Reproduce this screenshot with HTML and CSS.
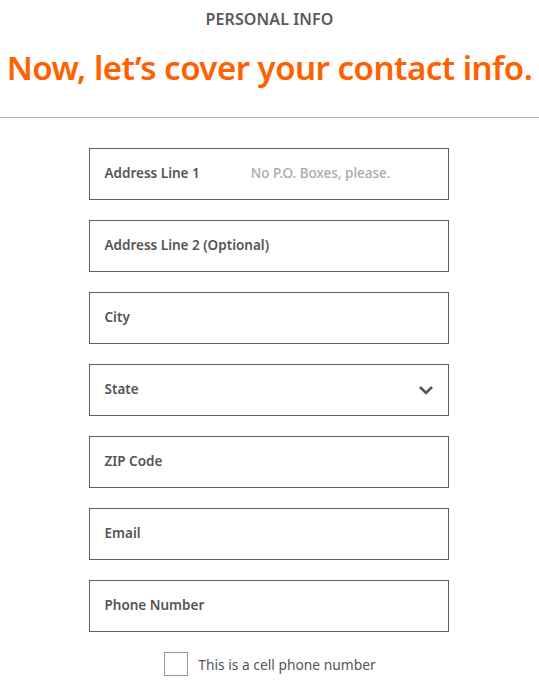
FILE: index.html
```html
<!DOCTYPE html>
<html lang="en">
<head>
<meta charset="utf-8">
<title>Personal Info</title>
<link rel="stylesheet" href="styles.css">
</head>
<body>
<div class="page">
  <header class="head">
    <div class="eyebrow">PERSONAL INFO</div>
    <h1 class="title">Now, let’s cover your contact info.</h1>
  </header>
  <hr class="rule">
  <form class="form">
    <label class="field">
      <span class="label">Address Line 1</span>
      <span class="hint">No P.O. Boxes, please.</span>
    </label>
    <label class="field"><span class="label">Address Line 2 (Optional)</span></label>
    <label class="field"><span class="label">City</span></label>
    <label class="field select">
      <span class="label">State</span>
      <svg class="chev" width="16" height="10" viewBox="0 0 16 10"><path d="M2 2 L8 8 L14 2" fill="none" stroke="#555" stroke-width="2.6"/></svg>
    </label>
    <label class="field"><span class="label">ZIP Code</span></label>
    <label class="field"><span class="label">Email</span></label>
    <label class="field"><span class="label">Phone Number</span></label>
    <label class="check">
      <span class="box"></span>
      <span class="check-text">This is a cell phone number</span>
    </label>
  </form>
</div>
</body>
</html>
```
FILE: styles.css
```css
html, body {
  margin: 0;
  padding: 0;
  background: #fff;
}
body {
  font-family: "Noto Sans", "Open Sans", sans-serif;
  color: #555;
}
.page {
  width: 539px;
}
.head {
  text-align: center;
  padding-top: 9px;
}
.eyebrow {
  font-size: 16px;
  line-height: 20px;
  font-weight: 600;
  color: #5a5a5a;
  letter-spacing: 0.1px;
}
.title {
  margin: 19px 0 0 0;
  font-size: 33px;
  line-height: 40px;
  font-weight: 600;
  color: #ff6000;
  letter-spacing: -0.5px;
  white-space: nowrap;
}
.rule {
  margin: 29px 0 0 0;
  border: 0;
  border-top: 1px solid #b0b0b0;
  height: 0;
}
.form {
  display: flex;
  flex-direction: column;
  align-items: center;
  gap: 20px;
  padding-top: 30px;
  padding-right: 2px;
}
.field {
  box-sizing: border-box;
  width: 360px;
  height: 52px;
  border: 1px solid #5f5f5f;
  display: flex;
  align-items: center;
  padding: 0 15px;
  font-size: 13.5px;
  font-weight: 600;
  color: #555;
}
.label {
  margin-top: -3px;
}
.hint {
  margin-left: 51px;
  margin-top: -3px;
  color: #aaa;
  font-weight: 500;
}
.select {
  justify-content: space-between;
  padding-right: 14px;
}
.chev {
  display: block;
}
.check {
  display: flex;
  align-items: center;
  gap: 10px;
  margin-top: 0;
  margin-left: 3px;
}
.box {
  box-sizing: border-box;
  width: 24px;
  height: 24px;
  border: 1px solid #9a9a9a;
  background: #fff;
}
.check-text {
  font-size: 13.8px;
  color: #555;
}
```
